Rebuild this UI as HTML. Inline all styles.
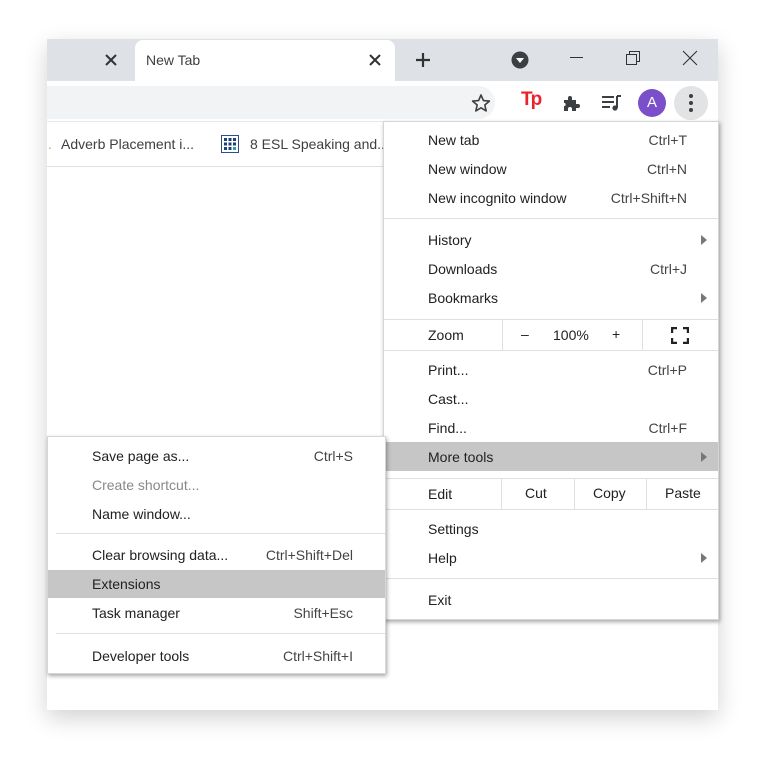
<!DOCTYPE html>
<html><head><meta charset="utf-8"><style>
*{margin:0;padding:0;box-sizing:border-box}
body{width:765px;height:758px;background:#fff;position:relative;overflow:hidden;font-family:"Liberation Sans",sans-serif;font-size:14px;color:#202124}
.a{position:absolute}
.win{left:47px;top:39px;width:671px;height:671px;background:#fff;box-shadow:0 8px 22px rgba(0,0,0,.18)}
.t{position:absolute;white-space:nowrap;line-height:16px}
.menu{background:#fff;box-shadow:1px 2px 4px rgba(0,0,0,.35);border:1px solid #d6d6d6}
.sep{position:absolute;height:1px;background:#e0e0e0}
.sc{color:#444}
.hl{position:absolute;background:#c6c6c6}
.arr{position:absolute;width:0;height:0;border-top:5px solid transparent;border-bottom:5px solid transparent;border-left:6px solid #777}
.vl{position:absolute;width:1px;background:#e0e0e0}
</style></head><body>
<div class="a win"></div>
<!-- tab strip -->
<div class="a" style="left:47px;top:39px;width:671px;height:42px;background:#dee1e6"></div>
<div class="a" style="left:135px;top:40px;width:260px;height:42px;background:#fff;border-radius:8px 8px 0 0"></div>
<div class="t" style="left:146px;top:52px;color:#3c4043">New Tab</div>
<svg class="a" style="left:104px;top:53px" width="14" height="14"><path d="M2 2L12 12M12 2L2 12" stroke="#333" stroke-width="2"/></svg>
<svg class="a" style="left:368px;top:53px" width="14" height="14"><path d="M2 2L12 12M12 2L2 12" stroke="#333" stroke-width="2"/></svg>
<svg class="a" style="left:414px;top:51px" width="18" height="18"><path d="M9 2V16M2 9H16" stroke="#333" stroke-width="2.2"/></svg>
<svg class="a" style="left:511px;top:51px" width="18" height="18"><circle cx="9" cy="9" r="8.5" fill="#3c4043"/><path d="M5 7H13L9 12Z" fill="#fff"/></svg>
<div class="a" style="left:570px;top:57px;width:13px;height:1px;background:#333"></div>
<svg class="a" style="left:625px;top:50px" width="16" height="16"><rect x="1.5" y="4.5" width="10" height="10" fill="none" stroke="#333"/><path d="M4.5 4.5V1.5H14.5V11.5H11.5" fill="none" stroke="#333"/></svg>
<svg class="a" style="left:682px;top:50px" width="16" height="16"><path d="M1 1L15 15M15 1L1 15" stroke="#333" stroke-width="1.1"/></svg>
<!-- toolbar -->
<div class="a" style="left:47px;top:86px;width:448px;height:33px;background:#f1f3f4;border-radius:0 17px 17px 0"></div>
<svg class="a" style="left:471px;top:93px" width="20" height="20"><path d="M10 2L12.4 7.6L18.4 8.1L13.8 12L15.2 17.9L10 14.8L4.8 17.9L6.2 12L1.6 8.1L7.6 7.6Z" fill="none" stroke="#3c4043" stroke-width="1.6" stroke-linejoin="round"/></svg>
<div class="t" style="left:521px;top:92px;color:#e8232a;font-weight:bold;font-size:19px;letter-spacing:-2px">Tp</div>
<svg class="a" style="left:562px;top:94px" width="18" height="18"><path d="M2 6H6V4A2 2 0 0 1 10 4V6H14V10H16A2 2 0 0 1 16 14H14V17H10V15A2 2 0 0 0 6 15V17H2V12H3A2 2 0 0 0 3 9H2Z" fill="#3c4043"/></svg>
<svg class="a" style="left:601px;top:94px" width="22" height="18"><path d="M1 3H13M1 8H13M1 13H9" stroke="#3c4043" stroke-width="2"/><path d="M16 2V14" stroke="#3c4043" stroke-width="2"/><path d="M16 2H20" stroke="#3c4043" stroke-width="2"/><circle cx="14" cy="14" r="2.6" fill="#3c4043"/></svg>
<div class="a" style="left:638px;top:89px;width:28px;height:28px;border-radius:50%;background:#7b4fc9;color:#fff;text-align:center;line-height:28px;font-size:15px">A</div>
<div class="a" style="left:674px;top:86px;width:34px;height:34px;border-radius:50%;background:#e2e3e5"></div>
<div class="a" style="left:689px;top:94px;width:4px;height:4px;border-radius:50%;background:#3c4043"></div>
<div class="a" style="left:689px;top:101px;width:4px;height:4px;border-radius:50%;background:#3c4043"></div>
<div class="a" style="left:689px;top:108px;width:4px;height:4px;border-radius:50%;background:#3c4043"></div>
<div class="a" style="left:47px;top:121px;width:671px;height:1px;background:#e8e8e8"></div>
<!-- bookmarks -->
<div class="t" style="left:48px;top:136px;color:#c8a060">.</div>
<div class="t" style="left:61px;top:136px;color:#3c4043">Adverb Placement i...</div>
<svg class="a" style="left:221px;top:135px" width="18" height="18"><rect x="0.5" y="0.5" width="17" height="17" fill="#fff" stroke="#2a4d8f"/><g fill="#1d3f7a"><rect x="3" y="3" width="3" height="3"/><rect x="7.5" y="3" width="3" height="3"/><rect x="12" y="3" width="3" height="3"/><rect x="3" y="7.5" width="3" height="3"/><rect x="7.5" y="7.5" width="3" height="3"/><rect x="12" y="7.5" width="3" height="3"/><rect x="3" y="12" width="3" height="3"/><rect x="7.5" y="12" width="3" height="3"/></g><rect x="12" y="12" width="3" height="3" fill="#2aa0a0"/></svg>
<div class="t" style="left:250px;top:136px;color:#3c4043">8 ESL Speaking and...</div>
<div class="a" style="left:47px;top:166px;width:340px;height:1px;background:#e0e0e0"></div>
<!-- main menu -->
<div class="a menu" style="left:383px;top:121px;width:336px;height:499px"></div>
<div class="t" style="left:428px;top:132px">New tab</div><div class="t sc" style="right:78px;top:132px">Ctrl+T</div>
<div class="t" style="left:428px;top:161px">New window</div><div class="t sc" style="right:78px;top:161px">Ctrl+N</div>
<div class="t" style="left:428px;top:190px">New incognito window</div><div class="t sc" style="right:78px;top:190px">Ctrl+Shift+N</div>
<div class="sep" style="left:384px;top:218px;width:334px"></div>
<div class="t" style="left:428px;top:232px">History</div><div class="arr" style="left:701px;top:235px"></div>
<div class="t" style="left:428px;top:261px">Downloads</div><div class="t sc" style="right:78px;top:261px">Ctrl+J</div>
<div class="t" style="left:428px;top:290px">Bookmarks</div><div class="arr" style="left:701px;top:293px"></div>
<div class="sep" style="left:384px;top:319px;width:334px"></div>
<div class="t" style="left:428px;top:327px">Zoom</div>
<div class="vl" style="left:502px;top:320px;height:30px"></div>
<div class="t" style="left:521px;top:326px">–</div>
<div class="t" style="left:553px;top:327px">100%</div>
<div class="t" style="left:612px;top:326px">+</div>
<div class="vl" style="left:642px;top:320px;height:30px"></div>
<svg class="a" style="left:671px;top:327px" width="18" height="17"><path d="M1 6V1H6M12 1H17V6M17 11V16H12M6 16H1V11" fill="none" stroke="#222" stroke-width="2.4"/></svg>
<div class="sep" style="left:384px;top:350px;width:334px"></div>
<div class="t" style="left:428px;top:362px">Print...</div><div class="t sc" style="right:78px;top:362px">Ctrl+P</div>
<div class="t" style="left:428px;top:391px">Cast...</div>
<div class="t" style="left:428px;top:420px">Find...</div><div class="t sc" style="right:78px;top:420px">Ctrl+F</div>
<div class="hl" style="left:384px;top:442px;width:334px;height:29px"></div>
<div class="t" style="left:428px;top:449px">More tools</div><div class="arr" style="left:701px;top:452px"></div>
<div class="sep" style="left:384px;top:478px;width:334px"></div>
<div class="t" style="left:428px;top:486px">Edit</div>
<div class="vl" style="left:501px;top:479px;height:30px"></div>
<div class="t" style="left:525px;top:485px">Cut</div>
<div class="vl" style="left:574px;top:479px;height:30px"></div>
<div class="t" style="left:593px;top:485px">Copy</div>
<div class="vl" style="left:646px;top:479px;height:30px"></div>
<div class="t" style="left:665px;top:485px">Paste</div>
<div class="sep" style="left:384px;top:509px;width:334px"></div>
<div class="t" style="left:428px;top:521px">Settings</div>
<div class="t" style="left:428px;top:550px">Help</div><div class="arr" style="left:701px;top:553px"></div>
<div class="sep" style="left:384px;top:578px;width:334px"></div>
<div class="t" style="left:428px;top:592px">Exit</div>
<!-- submenu -->
<div class="a menu" style="left:47px;top:436px;width:339px;height:238px"></div>
<div class="t" style="left:92px;top:448px">Save page as...</div><div class="t sc" style="right:412px;top:448px">Ctrl+S</div>
<div class="t" style="left:92px;top:477px;color:#888">Create shortcut...</div>
<div class="t" style="left:92px;top:506px">Name window...</div>
<div class="sep" style="left:56px;top:533px;width:329px"></div>
<div class="t" style="left:92px;top:547px">Clear browsing data...</div><div class="t sc" style="right:412px;top:547px">Ctrl+Shift+Del</div>
<div class="hl" style="left:48px;top:570px;width:337px;height:28px"></div>
<div class="t" style="left:92px;top:576px">Extensions</div>
<div class="t" style="left:92px;top:605px">Task manager</div><div class="t sc" style="right:412px;top:605px">Shift+Esc</div>
<div class="sep" style="left:56px;top:633px;width:329px"></div>
<div class="t" style="left:92px;top:648px">Developer tools</div><div class="t sc" style="right:412px;top:648px">Ctrl+Shift+I</div>
</body></html>
